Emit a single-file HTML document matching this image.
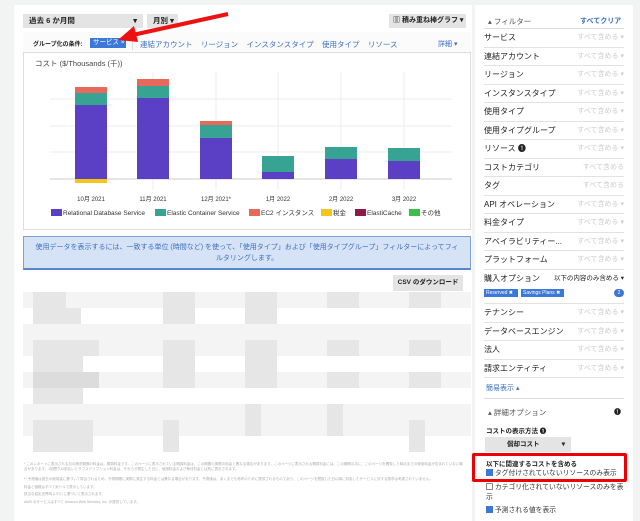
<!DOCTYPE html>
<html><head><meta charset="utf-8"><style>
*{margin:0;padding:0;box-sizing:border-box}
body{width:640px;height:521px;background:#f2f3f3;font-family:"Liberation Sans","Noto Sans CJK JP",sans-serif;position:relative;overflow:hidden;color:#222}
.a{position:absolute;white-space:nowrap}
.main{left:14px;top:5px;width:458px;height:516px;background:#fff}
.side{left:475px;top:5px;width:158px;height:516px;background:#fff}
.dd{background:#e4e4e4;font-size:7.5px;font-weight:bold;height:14px;line-height:14px;padding-left:6px}
.row{position:absolute;left:484px;width:140px;height:18.5px;border-bottom:1px solid #e2e2e2;font-size:8px;line-height:18px;white-space:nowrap}
.row span{position:absolute;right:0;top:0;color:#ccc;font-size:7px}
.grp{font-size:7.5px;color:#3b6fc4}
.fn{font-size:3.5px;color:#aaa;left:24px}
</style></head><body>
<div class="a main"></div>
<div class="a side"></div>
<div class="a dd" style="left:23px;top:14px;width:120px">過去 6 か月間<span style="position:absolute;right:6px">▾</span></div>
<div class="a dd" style="left:147px;top:14px;width:31px">月別 ▾</div>
<div class="a dd" style="left:389px;top:14px;width:77px;padding-left:4px;font-size:7px">▥ 積み重ね棒グラフ ▾</div>
<div class="a" style="left:23px;top:32px;width:448px;height:198px;border:1px solid #ddd"></div>
<div class="a" style="left:23px;top:32px;width:448px;height:21px;border-bottom:1px solid #ddd;background:#fbfbfb"></div>
<div class="a" style="left:33px;top:39px;font-size:6px;font-weight:bold">グループ化の条件:</div>
<div class="a" style="left:90px;top:38px;width:36px;height:10px;background:#3c78d8;color:#fff;font-size:6.5px;line-height:10px;padding-left:3px">サービス ×</div>
<div class="a" style="left:132px;top:36px;height:14px;border-left:1px solid #ddd"></div>
<div class="a grp" style="left:140px;top:39px">連結アカウント&nbsp;&nbsp;&nbsp; リージョン&nbsp;&nbsp;&nbsp; インスタンスタイプ&nbsp;&nbsp;&nbsp; 使用タイプ&nbsp;&nbsp;&nbsp; リソース</div>
<div class="a grp" style="left:438px;top:39px;font-size:7px">詳細 ▾</div>
<div class="a" style="left:35px;top:58px;font-size:7.5px;color:#444">コスト ($/Thousands (千))</div>
<svg class="a" style="left:0;top:0" width="470" height="230">
<g stroke="#eee" stroke-width="1"><line x1="50" y1="99" x2="452" y2="99"/><line x1="50" y1="126" x2="452" y2="126"/><line x1="50" y1="152" x2="452" y2="152"/>
<line x1="153" y1="72" x2="153" y2="190"/><line x1="216" y1="72" x2="216" y2="190"/><line x1="278" y1="72" x2="278" y2="190"/><line x1="341" y1="72" x2="341" y2="190"/><line x1="404" y1="72" x2="404" y2="190"/></g>
<line x1="50" y1="179" x2="452" y2="179" stroke="#ccc"/>
<g>
<rect x="75" y="87" width="32" height="6" fill="#e8695b"/><rect x="75" y="93" width="32" height="12" fill="#37a393"/><rect x="75" y="105" width="32" height="74" fill="#5b3fc4"/><rect x="75" y="179" width="32" height="4" fill="#f5c518"/>
<rect x="137" y="79" width="32" height="7" fill="#e8695b"/><rect x="137" y="86" width="32" height="12" fill="#37a393"/><rect x="137" y="98" width="32" height="81" fill="#5b3fc4"/>
<rect x="200" y="121" width="32" height="4" fill="#e8695b"/><rect x="200" y="125" width="32" height="13" fill="#37a393"/><rect x="200" y="138" width="32" height="41" fill="#5b3fc4"/>
<rect x="262" y="156" width="32" height="16" fill="#37a393"/><rect x="262" y="172" width="32" height="7" fill="#5b3fc4"/>
<rect x="325" y="147" width="32" height="12" fill="#37a393"/><rect x="325" y="159" width="32" height="20" fill="#5b3fc4"/>
<rect x="388" y="148" width="32" height="13" fill="#37a393"/><rect x="388" y="161" width="32" height="18" fill="#5b3fc4"/>
</g>
<g font-size="6" fill="#333" text-anchor="middle" font-family="Liberation Sans,Noto Sans CJK JP,sans-serif">
<text x="91" y="201">10月 2021</text><text x="153" y="201">11月 2021</text><text x="216" y="201">12月 2021*</text><text x="278" y="201">1月 2022</text><text x="341" y="201">2月 2022</text><text x="404" y="201">3月 2022</text></g>
<g font-size="6.5" fill="#333" font-family="Liberation Sans,Noto Sans CJK JP,sans-serif">
<rect x="51" y="209" width="11" height="7" fill="#5b3fc4"/><text x="63" y="215">Relational Database Service</text>
<rect x="155" y="209" width="11" height="7" fill="#37a393"/><text x="167" y="215">Elastic Container Service</text>
<rect x="249" y="209" width="11" height="7" fill="#e8695b"/><text x="261" y="215">EC2 インスタンス</text>
<rect x="321" y="209" width="11" height="7" fill="#f5c518"/><text x="333" y="215">税金</text>
<rect x="355" y="209" width="11" height="7" fill="#8c1a4a"/><text x="367" y="215">ElastiCache</text>
<rect x="409" y="209" width="11" height="7" fill="#3cbf4a"/><text x="421" y="215">その他</text></g>
<path d="M228 14 L128 36" stroke="#e11" stroke-width="4"/><polygon points="118,40 134,26 138,42" fill="#e11"/>
</svg>
<div class="a" style="left:23px;top:236px;width:448px;height:34px;background:#d6e3f7;border:1px solid #7da2da;border-bottom:2px solid #5a86cc;color:#3b6fc4;font-size:7px;text-align:center;padding:5px 8px;line-height:11px;white-space:normal">使用データを表示するには、一致する単位 (時間など) を使って、「使用タイプ」および「使用タイプグループ」フィルターによってフィルタリングします。</div>
<div class="a" style="left:393px;top:275px;width:70px;height:16px;background:#e4e4e4;font-size:6.5px;font-weight:bold;text-align:center;line-height:16px">CSV のダウンロード</div>
<svg class="a" style="left:23px;top:292px" width="448" height="164">
<g fill="#f4f4f4"><rect y="0" width="448" height="16"/><rect y="32" width="448" height="16"/><rect y="48" width="448" height="16"/><rect y="80" width="448" height="16"/><rect y="112" width="448" height="16"/><rect y="128" width="448" height="16"/></g>
<g fill="#e6e6e6"><rect x="10" y="0" width="33" height="16"/><rect x="10" y="16" width="48" height="16"/><rect x="140" y="0" width="32" height="32"/><rect x="222" y="0" width="32" height="32"/><rect x="304" y="0" width="32" height="16"/><rect x="386" y="0" width="32" height="16"/>
<rect x="10" y="48" width="66" height="16"/><rect x="140" y="48" width="32" height="32"/><rect x="222" y="48" width="32" height="32"/><rect x="304" y="48" width="32" height="16"/><rect x="386" y="48" width="32" height="16"/>
<rect x="10" y="64" width="50" height="16"/><rect x="10" y="80" width="66" height="16" fill="#dcdcdc"/><rect x="140" y="80" width="32" height="16"/><rect x="222" y="80" width="32" height="16"/><rect x="304" y="80" width="32" height="16"/><rect x="386" y="80" width="32" height="16"/>
<rect x="10" y="96" width="50" height="16"/><rect x="10" y="128" width="60" height="32"/><rect x="140" y="128" width="16" height="32"/><rect x="222" y="112" width="16" height="32"/><rect x="304" y="112" width="16" height="32"/><rect x="386" y="128" width="16" height="32"/></g>
</svg>
<div class="a fn" style="top:462px;width:440px;line-height:5px;white-space:normal">* このレポートに表示される月の請求期間の料金は、概算料金です。このページに表示されている概算料金は、この期間の実際の料金と異なる場合があります。このページに表示される概算料金には、この期間の月に、このページを閲覧した時点までの使用料金が含まれていない場合があります。1回限りの前払いとサブスクリプション料金は、それらが発生した日に、使用料金および毎月料金とは別に表示されます。</div>
<div class="a fn" style="top:477px">** 予測値は過去の使用量に基づいて算出されるため、予測期間に実際に発生する料金とは異なる場合があります。予測値は、あくまでも参考のために提供されるものであり、このページを閲覧した日以降に利用したサービスに対する請求は考慮されていません。</div>
<div class="a fn" style="top:485px">料金と価格はすべて米ドルで表示しています。</div>
<div class="a fn" style="top:492px">該当な協定世界時 (UTC) に基づいて表示されます。</div>
<div class="a fn" style="top:500px">AWS のサービスはすべて Amazon Web Services, Inc. が提供しています。</div>

<div class="a" style="left:488px;top:16px;font-size:7.5px;color:#555">▴ フィルター</div>
<div class="a" style="left:580px;top:16px;font-size:7px;color:#3b6fc4;font-weight:bold">すべてクリア</div>
<div class="a" style="left:484px;top:28px;width:140px;border-top:1px solid #ddd"></div>
<div class="row" style="top:29px">サービス<span>すべて含める ▾</span></div>
<div class="row" style="top:47.5px">連結アカウント<span>すべて含める ▾</span></div>
<div class="row" style="top:66px">リージョン<span>すべて含める ▾</span></div>
<div class="row" style="top:84.5px">インスタンスタイプ<span>すべて含める ▾</span></div>
<div class="row" style="top:103px">使用タイプ<span>すべて含める ▾</span></div>
<div class="row" style="top:121.5px">使用タイプグループ<span>すべて含める ▾</span></div>
<div class="row" style="top:140px">リソース ❶<span>すべて含める ▾</span></div>
<div class="row" style="top:158.5px">コストカテゴリ<span>すべて含める</span></div>
<div class="row" style="top:177px">タグ<span>すべて含める</span></div>
<div class="row" style="top:195.5px">API オペレーション<span>すべて含める ▾</span></div>
<div class="row" style="top:214px">料金タイプ<span>すべて含める ▾</span></div>
<div class="row" style="top:232.5px">アベイラビリティー...<span>すべて含める ▾</span></div>
<div class="row" style="top:251px">プラットフォーム<span>すべて含める ▾</span></div>
<div class="row" style="top:270px;height:34px">購入オプション<span style="color:#222;font-size:6.5px">以下の内容のみ含める ▾</span>
<div class="a" style="left:0;top:19px;background:#3c78d8;color:#fff;font-size:5px;line-height:8px;padding:0 2px;width:34px">Reserved ✖</div>
<div class="a" style="left:37px;top:19px;background:#3c78d8;color:#fff;font-size:5px;line-height:8px;padding:0 2px;width:43px">Savings Plans ✖</div>
<div class="a" style="left:130px;top:19px;background:#3c78d8;color:#fff;font-size:5px;line-height:8px;width:10px;border-radius:4px;text-align:center">2</div></div>
<div class="row" style="top:304px">テナンシー<span>すべて含める ▾</span></div>
<div class="row" style="top:322.5px">データベースエンジン<span>すべて含める ▾</span></div>
<div class="row" style="top:341px">法人<span>すべて含める ▾</span></div>
<div class="row" style="top:359.5px">請求エンティティ<span>すべて含める ▾</span></div>
<div class="a" style="left:486px;top:383px;font-size:7px;color:#3b6fc4">簡易表示 ▴</div>
<div class="a" style="left:484px;top:398px;width:140px;border-top:1px solid #ddd"></div>
<div class="a" style="left:488px;top:407px;font-size:7.5px;color:#555">▴ 詳細オプション</div>
<div class="a" style="left:614px;top:407px;font-size:7px">❶</div>
<div class="a" style="left:486px;top:425px;font-size:6.5px;font-weight:bold">コストの表示方法 ❶</div>
<div class="a" style="left:485px;top:437px;width:86px;height:15px;background:#e4e4e4;font-size:6.5px;font-weight:bold;line-height:15px;padding-left:22px">償却コスト<span style="position:absolute;right:6px">▾</span></div>
<div class="a" style="left:486px;top:458px;font-size:6.5px;font-weight:bold">以下に関連するコストを含める</div>
<div class="a" style="left:486px;top:467px;font-size:6.8px;color:#333"><span style="display:inline-block;width:7px;height:7px;background:#3c78d8;vertical-align:-1px"></span> タグ付けされていないリソースのみ表示</div>
<div class="a" style="left:486px;top:483px;font-size:6.8px;color:#333;width:140px;line-height:10px;white-space:normal"><span style="display:inline-block;width:7px;height:7px;border:1px solid #888;vertical-align:-1px"></span> カテゴリ化されていないリソースのみを表示</div>
<div class="a" style="left:486px;top:504px;font-size:6.8px;color:#333"><span style="display:inline-block;width:7px;height:7px;background:#3c78d8;vertical-align:-1px"></span> 予測される値を表示</div>
<div class="a" style="left:472px;top:453px;width:155px;height:29px;border:3px solid #e00;border-radius:2px"></div>
</body></html>
